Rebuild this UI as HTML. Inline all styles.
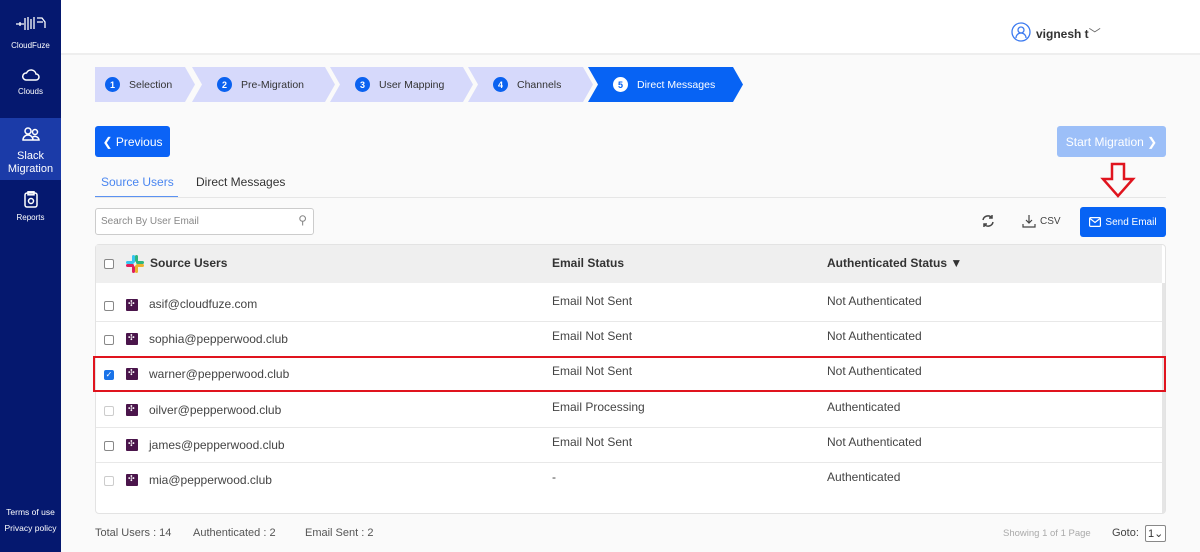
<!DOCTYPE html>
<html><head><style>
*{box-sizing:border-box;margin:0;padding:0}
body{width:1200px;height:552px;overflow:hidden;background:#fafafa;font-family:"Liberation Sans",sans-serif;position:relative;color:#333}
.side{position:absolute;left:0;top:0;width:61px;height:552px;background:#05186f;color:#fff;text-align:center}
.side .it{position:absolute;left:0;width:61px;font-size:9px}
.hdr{position:absolute;left:61px;top:0;right:0;height:55px;background:#fff;border-bottom:2px solid #eee}
.step{position:absolute;top:67px;height:35px;background:#d6d9fb;font-size:10.5px;color:#333;display:flex;align-items:center;clip-path:polygon(0 0,calc(100% - 10px) 0,100% 50%,calc(100% - 10px) 100%,0 100%,10px 50%)}
.step .n{width:15px;height:15px;border-radius:50%;background:#0b62f0;color:#fff;font-size:9px;font-weight:bold;display:flex;align-items:center;justify-content:center;margin-right:9px}
.btn{position:absolute;border-radius:3px;color:#fff;font-size:12px;display:flex;align-items:center;justify-content:center}
.row{position:absolute;left:96px;width:1066px;height:35px;border-bottom:1px solid #e8e8e8;background:#fff;font-size:12px;color:#444}
.row span{position:absolute;top:8px}
.cb{position:absolute;left:8px;top:13px;width:10px;height:10px;border:1px solid #888;border-radius:2px;background:#fff}
.sl{position:absolute;left:30px;top:11px;width:12px;height:12px;background:#4a154b;border-radius:1px}
.sl:after{content:"✣";color:#fff;font-size:8px;position:absolute;left:2px;top:0}
</style></head><body>
<div class="side">
 <div class="it" style="top:14px"><svg width="34" height="18" viewBox="0 0 34 18"><g stroke="#fff" stroke-width="1.3" fill="none"><path d="M2 10h8M6 8v4M11 4v12M14 3v13M17 5v10M20 3v12M23 4h5l3 4v6M23 8h6"/></g></svg></div>
 <div class="it" style="top:41px;font-size:8px">CloudFuze</div>
 <div class="it" style="top:68px"><svg width="18" height="14" viewBox="0 0 18 14"><path d="M4 12h10a3 3 0 0 0 0-6 5 5 0 0 0-9.5-1A3.5 3.5 0 0 0 4 12z" stroke="#fff" stroke-width="1.5" fill="none"/></svg></div>
 <div class="it" style="top:87px;font-size:8px">Clouds</div>
 <div class="it" style="top:118px;height:62px;background:#1b3ba8"></div>
 <div class="it" style="top:126px"><svg width="18" height="16" viewBox="0 0 18 16"><g stroke="#fff" stroke-width="1.5" fill="none"><circle cx="6" cy="5" r="3"/><circle cx="13" cy="6" r="2.5"/><path d="M1 14a5 5 0 0 1 10 0zM10 14h7a4 4 0 0 0-6-3"/></g></svg></div>
 <div class="it" style="top:150px;font-size:11px;line-height:13px">Slack<br>Migration</div>
 <div class="it" style="top:191px"><svg width="14" height="17" viewBox="0 0 14 17"><g stroke="#fff" stroke-width="1.5" fill="none"><rect x="1" y="2" width="12" height="14" rx="2"/><rect x="4" y="0.8" width="6" height="3"/><circle cx="7" cy="10" r="2.5"/></g></svg></div>
 <div class="it" style="top:213px;font-size:8px">Reports</div>
 <div class="it" style="top:507px;font-size:8.5px">Terms of use</div>
 <div class="it" style="top:523px;font-size:8.5px">Privacy policy</div>
</div>
<div class="hdr">
 <svg style="position:absolute;left:950px;top:22px" width="20" height="20" viewBox="0 0 20 20"><g stroke="#3d7bf0" stroke-width="1.3" fill="none"><circle cx="10" cy="10" r="9"/><circle cx="10" cy="8" r="3"/><path d="M5 16a5 5 0 0 1 10 0"/></g></svg>
 <div style="position:absolute;left:975px;top:25px;font-size:12px;font-weight:bold;color:#333">vignesh t<span style="font-weight:normal;color:#666">﹀</span></div>
</div>
<div class="step" style="left:95px;width:100px;clip-path:polygon(0 0,90px 0,100% 50%,90px 100%,0 100%)"><span class="n" style="margin-left:10px">1</span>Selection</div>
<div class="step" style="left:192px;width:143px"><span class="n" style="margin-left:25px">2</span>Pre-Migration</div>
<div class="step" style="left:330px;width:143px"><span class="n" style="margin-left:25px">3</span>User Mapping</div>
<div class="step" style="left:468px;width:125px"><span class="n" style="margin-left:25px">4</span>Channels</div>
<div class="step" style="left:588px;width:155px;background:#0763f4;color:#fff"><span class="n" style="margin-left:25px;background:#fff;color:#0763f4">5</span>Direct Messages</div>
<div class="btn" style="left:95px;top:126px;width:75px;height:31px;background:#0b63f6">❮&nbsp;Previous</div>
<div class="btn" style="left:1057px;top:126px;width:109px;height:31px;background:#9cbff8">Start Migration ❯</div>
<div style="position:absolute;left:101px;top:175px;font-size:12px;color:#4a86f0">Source Users</div>
<div style="position:absolute;left:95px;top:196px;width:83px;height:2px;background:#5b92f2"></div>
<div style="position:absolute;left:196px;top:175px;font-size:12px;color:#333">Direct Messages</div>
<div style="position:absolute;left:95px;top:197px;width:1071px;height:1px;background:#e6e6e6"></div>
<div style="position:absolute;left:95px;top:208px;width:219px;height:27px;border:1px solid #ccc;border-radius:3px;background:#fff;font-size:10px;color:#888;padding:7px 5px">Search By User Email<span style="position:absolute;right:6px;top:4px;font-size:12px">⚲</span></div>
<svg style="position:absolute;left:981px;top:214px" width="14" height="14" viewBox="0 0 14 14"><g stroke="#444" stroke-width="1.5" fill="none"><path d="M2 6a5 5 0 0 1 9-2M12 8a5 5 0 0 1-9 2"/><path d="M11 1v3h-3M3 13v-3h3"/></g></svg>
<svg style="position:absolute;left:1022px;top:214px" width="14" height="14" viewBox="0 0 14 14"><g stroke="#444" stroke-width="1.2" fill="none"><path d="M7 1v8M4 6l3 3 3-3M1 10v3h12v-3"/></g></svg>
<div style="position:absolute;left:1040px;top:216px;font-size:10px;color:#444">CSV</div>
<div class="btn" style="left:1080px;top:207px;width:86px;height:30px;background:#0763f4;font-size:10px"><svg width="12" height="10" viewBox="0 0 12 10" style="margin-right:4px"><g stroke="#fff" stroke-width="1.2" fill="none"><rect x="0.6" y="0.6" width="10.8" height="8.8" rx="1"/><path d="M1 1.5l5 4 5-4"/></g></svg>Send Email</div>
<svg style="position:absolute;left:1098px;top:162px" width="40" height="40" viewBox="0 0 40 40"><path d="M14 2h12v15h9L20 34 5 17h9z" fill="none" stroke="#e0141e" stroke-width="2.5"/></svg>
<div style="position:absolute;left:95px;top:244px;width:1071px;height:270px;border:1px solid #e3e3e3;border-radius:4px;background:#fff"></div>
<div style="position:absolute;left:96px;top:245px;width:1066px;height:38px;background:#efefef;font-size:12px;font-weight:bold;color:#333">
 <div class="cb" style="top:14px"></div>
 <svg style="position:absolute;left:29px;top:9px" width="20" height="20" viewBox="0 0 20 20"><rect x="7" y="1" width="3" height="8" rx="1.5" fill="#36c5f0"/><rect x="1" y="7" width="8" height="3" rx="1.5" fill="#36c5f0"/><rect x="11" y="7" width="8" height="3" rx="1.5" fill="#2eb67d"/><rect x="10" y="1" width="3" height="7" rx="1.5" fill="#2eb67d"/><rect x="10" y="11" width="3" height="8" rx="1.5" fill="#ecb22e"/><rect x="11" y="10" width="8" height="3" rx="1.5" fill="#ecb22e"/><rect x="1" y="10" width="8" height="3" rx="1.5" fill="#e01e5a"/><rect x="7" y="12" width="3" height="7" rx="1.5" fill="#e01e5a"/></svg>
 <span style="position:absolute;left:54px;top:11px">Source Users</span>
 <span style="position:absolute;left:456px;top:11px">Email Status</span>
 <span style="position:absolute;left:731px;top:11px">Authenticated Status ▼</span>
</div>
<div style="position:absolute;left:1162px;top:283px;width:3px;height:230px;background:#e5e5e5"></div>
<div class="row" style="top:287px"><div class="cb" style="top:14px"></div><div class="sl" style="top:12px"></div><span style="left:53px;top:10px">asif@cloudfuze.com</span><span style="left:456px;top:7px">Email Not Sent</span><span style="left:731px;top:7px">Not Authenticated</span></div>
<div class="row" style="top:322px"><div class="cb"></div><div class="sl"></div><span style="left:53px;top:10px">sophia@pepperwood.club</span><span style="left:456px;top:7px">Email Not Sent</span><span style="left:731px;top:7px">Not Authenticated</span></div>
<div class="row" style="top:357px"><div class="cb" style="background:#1a73e8;border-color:#1a73e8;color:#fff;font-size:8px;line-height:8px;text-align:center">✓</div><div class="sl"></div><span style="left:53px;top:10px">warner@pepperwood.club</span><span style="left:456px;top:7px">Email Not Sent</span><span style="left:731px;top:7px">Not Authenticated</span></div>
<div class="row" style="top:393px"><div class="cb" style="border-color:#ccc"></div><div class="sl"></div><span style="left:53px;top:10px">oilver@pepperwood.club</span><span style="left:456px;top:7px">Email Processing</span><span style="left:731px;top:7px">Authenticated</span></div>
<div class="row" style="top:428px"><div class="cb"></div><div class="sl"></div><span style="left:53px;top:10px">james@pepperwood.club</span><span style="left:456px;top:7px">Email Not Sent</span><span style="left:731px;top:7px">Not Authenticated</span></div>
<div class="row" style="top:463px;border:none"><div class="cb" style="border-color:#ccc"></div><div class="sl"></div><span style="left:53px;top:10px">mia@pepperwood.club</span><span style="left:456px;top:7px">-</span><span style="left:731px;top:7px">Authenticated</span></div>
<div style="position:absolute;left:93px;top:356px;width:1073px;height:36px;border:2px solid #e0141e"></div>
<div style="position:absolute;left:95px;top:527px;font-size:11px;color:#555">Total Users : 14</div>
<div style="position:absolute;left:193px;top:527px;font-size:11px;color:#555">Authenticated : 2</div>
<div style="position:absolute;left:305px;top:527px;font-size:11px;color:#555">Email Sent : 2</div>
<div style="position:absolute;left:1003px;top:528px;font-size:9.5px;color:#aaa">Showing 1 of 1 Page</div>
<div style="position:absolute;left:1112px;top:527px;font-size:11px;color:#444">Goto:</div>
<div style="position:absolute;left:1145px;top:525px;width:21px;height:17px;border:1px solid #888;border-radius:2px;background:#fff;font-size:11px;padding:1px 2px">1⌄</div>
</body></html>
